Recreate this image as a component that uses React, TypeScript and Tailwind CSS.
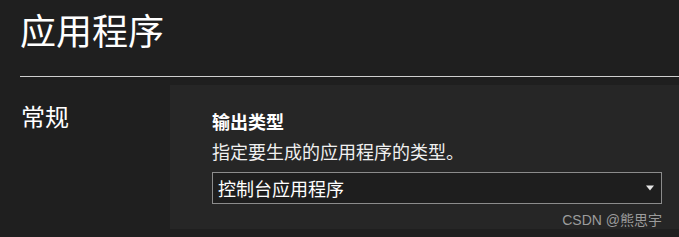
export default function App() {
  return (
    <div
      className="relative w-[679px] h-[237px] overflow-hidden bg-[#1f1f1f] text-white"
      style={{ fontFamily: '"Noto Sans CJK SC", "Noto Sans", sans-serif' }}
    >
      {/* title */}
      <div className="pl-5 pt-[11px]">
        <h1 className="text-[36px] leading-none font-normal">应用程序</h1>
      </div>
      <div className="ml-5 mt-[29px] border-t border-[#cfcfcf]" />

      {/* body */}
      <div className="flex mt-[8px]">
        <div className="w-[170px] pl-[21px] pt-[19px]">
          <div className="text-[24px] leading-none">常规</div>
        </div>
        <div className="flex-1 h-[144px] bg-[#262626] pl-[42px] pt-[27px]">
          <div className="text-[18px] leading-none font-bold">输出类型</div>
          <div className="mt-[12px] text-[18px] leading-none text-[#f0f0f0]">
            指定要生成的应用程序的类型。
          </div>
          <div className="mt-[12px] flex items-center justify-between w-[450px] h-[32px] border border-[#8c8c8c] bg-[#1e1e1e] pl-[5px] pr-[5px]">
            <span className="text-[18px] leading-none">控制台应用程序</span>
            <svg width="10" height="6" viewBox="0 0 10 6" className="mr-[1px]">
              <path d="M1 0.5 L9 0.5 L5 5.5 Z" fill="#e6e6e6" />
            </svg>
          </div>
        </div>
      </div>

      {/* watermark */}
      <div
        className="absolute right-[17px] bottom-[10px] text-[14px] leading-none text-[#9c9c9c]"
        style={{ fontFamily: '"Liberation Sans", "Noto Sans CJK SC", sans-serif' }}
      >
        CSDN @熊思宇
      </div>
    </div>
  );
}
